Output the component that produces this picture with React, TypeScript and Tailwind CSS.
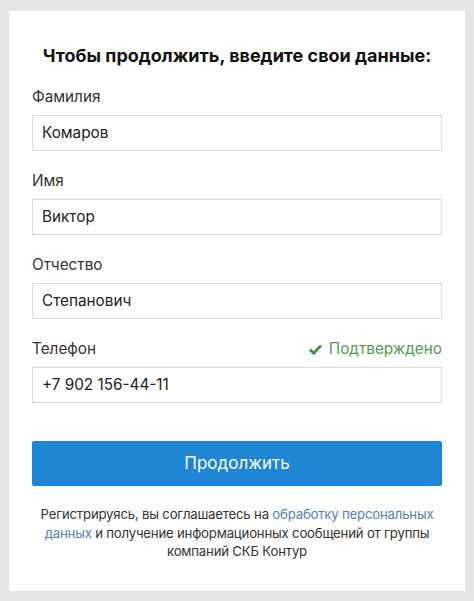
import React from "react";

function Field({ label, value, right }: { label: string; value: string; right?: React.ReactNode }) {
  return (
    <div className="flex flex-col">
      <div className="flex items-center justify-between h-[22px]">
        <span className="text-[15.3px] leading-[22px] text-[#333333]">{label}</span>
        {right}
      </div>
      <div className="mt-[7px] h-[36px] border border-[#dcdcdc] flex items-center px-[9px] text-[15.3px] text-[#222222]">
        {value}
      </div>
    </div>
  );
}

export default function App() {
  return (
    <div
      className="min-h-[601px] w-[474px] bg-[#e6e6e6] pt-[11px] px-[9px] pb-[10px]"
      style={{ fontFamily: "Inter, 'Noto Sans', sans-serif" }}
    >
      <div className="bg-white h-[580px] px-[23px] pt-[33px]">
        <h1 className="text-center text-[18px] leading-[24px] font-bold text-[#111111]">
          Чтобы продолжить, введите свои данные:
        </h1>
        <div className="mt-[18px] flex flex-col gap-[19px]">
          <Field label="Фамилия" value="Комаров" />
          <Field label="Имя" value="Виктор" />
          <Field label="Отчество" value="Степанович" />
          <Field
            label="Телефон"
            value="+7 902 156-44-11"
            right={
              <span className="flex items-center gap-[7px] text-[15.3px] leading-[22px] text-[#519c51]">
                <svg width="13" height="11" viewBox="0 0 13 11">
                  <path d="M1 5.6 L4.7 9.3 L12 1.6" fill="none" stroke="#3f8f3f" strokeWidth="2.8" />
                </svg>
                Подтверждено
              </span>
            }
          />
        </div>
        <button className="mt-[38px] w-full h-[45px] bg-[#1e86d4] rounded-[2px] text-white text-[17px] flex items-center justify-center">
          Продолжить
        </button>
        <p className="mt-[19px] w-full text-center text-[13.2px] leading-[18.5px] tracking-[-0.2px] text-[#333333]">
          Регистрируясь, вы соглашаетесь на <span className="text-[#5581b0]">обработку персональных данных</span> и получение информационных сообщений от группы компаний СКБ Контур
        </p>
      </div>
    </div>
  );
}
